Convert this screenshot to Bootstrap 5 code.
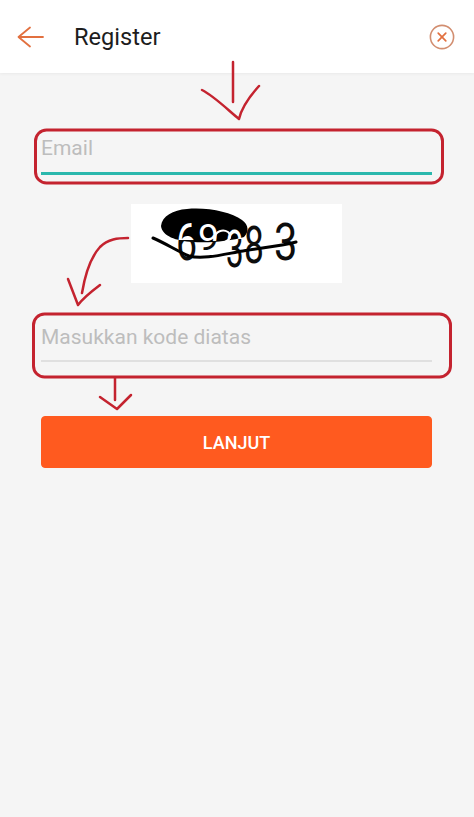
<!DOCTYPE html>
<html lang="id">
<head>
<meta charset="utf-8">
<title>Register</title>
<link href="https://cdn.jsdelivr.net/npm/bootstrap@5.3.0/dist/css/bootstrap.min.css" rel="stylesheet">
<style>
html, body { height: 100%; }
body { background: #f5f5f5; font-family: Roboto, "Liberation Sans", sans-serif; position: relative; overflow: hidden; }
.app-header { height: 73px; background: #fff; padding: 0 19px 0 17px; box-shadow: 0 1px 3px rgba(0,0,0,.05); }
.back-slot { width: 57px; }
.app-title { font-size: 23.6px; color: #1d1d1d; line-height: 1; margin-top: 3px; }
.form-area { padding: 0 42px 0 41px; }
.fake-field { font-size: 21px; line-height: 36px; color: #bdbdbd; }
.field-email { margin-top: 57px; height: 45px; border-bottom: 3px solid #2bb8ad; }
.field-code { margin-top: 36px; height: 43px; border-bottom: 2px solid #e0e0e0; }
.captcha-box { display: block; width: 211px; height: 79px; margin: 29px auto 0; background: #fff; }
.captcha-digit { font-family: Roboto, "Liberation Sans", sans-serif; font-size: 52px; font-weight: 400; }
.btn-next { height: 52px; margin-top: 54px; background: #ff5a1f; border-color: #ff5a1f; color: #fff; font-size: 18px; font-weight: 500; border-radius: 4px; }
.btn-next:hover { background: #ff5a1f; border-color: #ff5a1f; color: #fff; }
.notes-layer { position: absolute; left: 0; top: 0; pointer-events: none; }
.notes-layer * { fill: none; stroke: #c4232f; stroke-linecap: round; stroke-linejoin: round; }
</style>
</head>
<body>
<header class="app-header d-flex align-items-center">
  <div class="back-slot d-flex align-items-center">
    <svg width="27" height="22" viewBox="0 0 27 22" aria-hidden="true"><path d="M26 11H2M13 1.5 1.5 11 13 20.5" fill="none" stroke="#e2703f" stroke-width="1.8" stroke-linecap="round" stroke-linejoin="round"/></svg>
  </div>
  <div class="app-title flex-grow-1">Register</div>
  <svg width="26" height="26" viewBox="0 0 26 26" aria-hidden="true"><circle cx="13" cy="13" r="11.6" fill="none" stroke="#d28e70" stroke-width="1.6"/><path d="M9.2 9.2 16.8 16.8M16.8 9.2 9.2 16.8" fill="none" stroke="#e2703f" stroke-width="1.7" stroke-linecap="round"/></svg>
</header>
<main class="form-area">
  <div class="fake-field field-email">Email</div>
  <svg class="captcha-box" viewBox="0 0 211 79" role="img" aria-label="kode captcha">
    <defs>
      <linearGradient id="digit-six" x1="0" y1="0" x2="0" y2="1"><stop offset="46%" stop-color="#fff"/><stop offset="46%" stop-color="#0d0d0d"/></linearGradient>
      <linearGradient id="digit-nine" x1="0" y1="0" x2="0" y2="1"><stop offset="59%" stop-color="#fff"/><stop offset="59%" stop-color="#0d0d0d"/></linearGradient>
      <linearGradient id="digit-three" x1="0" y1="0" x2="0" y2="1"><stop offset="33%" stop-color="#fff"/><stop offset="33%" stop-color="#0d0d0d"/></linearGradient>
    </defs>
    <path d="M30 22C31 12 42 6 56 5 76 3 100 8 111 16 118 21 118 28 113 33 100 37 80 39 62 38 45 37 31 32 30 22Z" fill="#000"/>
    <text class="captcha-digit" fill="url(#digit-six)" transform="translate(45 56) scale(.72 1)">6</text>
    <text class="captcha-digit" fill="url(#digit-nine)" transform="translate(67 46) scale(.72 .72)">9</text>
    <text class="captcha-digit" fill="url(#digit-three)" transform="translate(95 63) scale(.6 1)">3</text>
    <text class="captcha-digit" fill="#0d0d0d" transform="translate(113 59) scale(.68 1)">8</text>
    <text class="captcha-digit" fill="#0d0d0d" transform="translate(143 56) scale(.8 1)">3</text>
    <path d="M84 34C84 27 92 25 97 28 101 31 99 36 94 38" fill="none" stroke="#fff" stroke-width="2" stroke-linecap="round"/>
    <path d="M22 34C34 39 46 47 58 52 72 56 94 50 112 47 130 44 150 42 165 38" fill="none" stroke="#000" stroke-width="3" stroke-linecap="round"/>
  </svg>
  <div class="fake-field field-code">Masukkan kode diatas</div>
  <button type="button" class="btn btn-next w-100">LANJUT</button>
</main>
<svg class="notes-layer" width="474" height="817" viewBox="0 0 474 817" aria-hidden="true">
  <rect x="35.5" y="130" width="407" height="53" rx="11" stroke-width="3"/>
  <rect x="33.5" y="314" width="417" height="63" rx="11" stroke-width="3"/>
  <path d="M233 62V102" stroke-width="2.5"/>
  <path d="M202 90C214 96 228 110 239 119 242 106 250 96 259 86" stroke-width="2.5"/>
  <path d="M128 238C118 238 108 239 100 247 90 258 85 275 82 293" stroke-width="2.5"/>
  <path d="M68 279 78 305C84 297 92 291 100 285" stroke-width="2.5"/>
  <path d="M115 378V400" stroke-width="2.5"/>
  <path d="M100 397 117 409 131 395" stroke-width="2.5"/>
</svg>
<script src="https://cdn.jsdelivr.net/npm/bootstrap@5.3.0/dist/js/bootstrap.bundle.min.js"></script>
</body>
</html>
